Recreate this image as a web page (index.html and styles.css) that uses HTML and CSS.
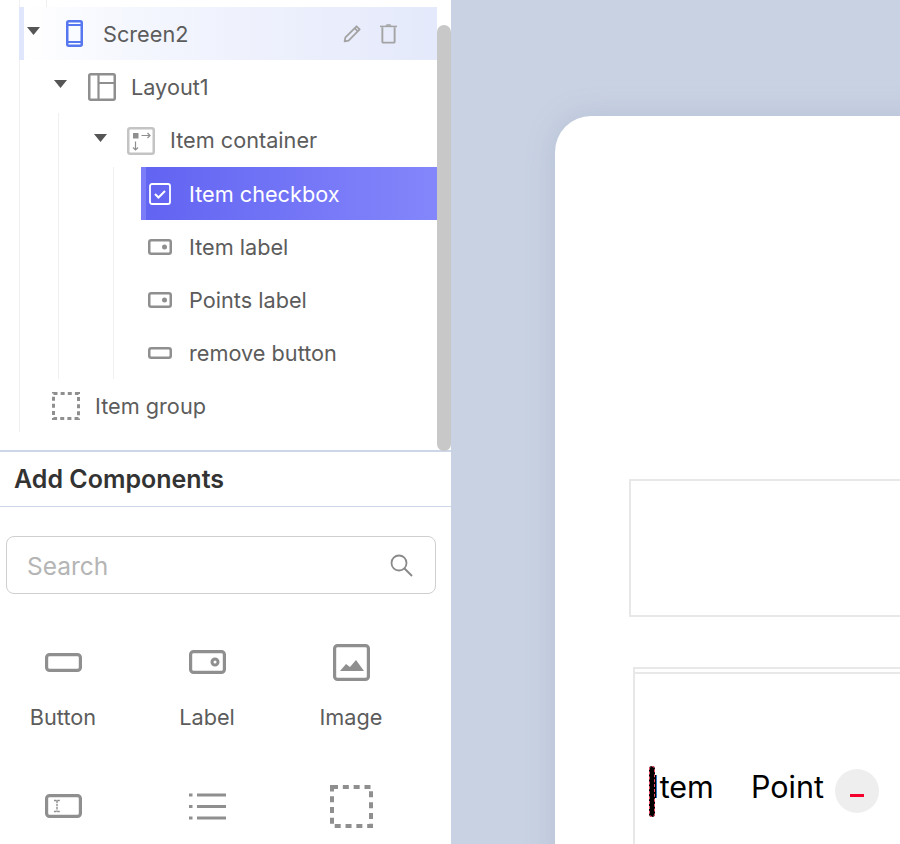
FILE: index.html
```html
<!DOCTYPE html>
<html lang="en">
<head>
<meta charset="utf-8">
<title>Designer</title>
<link rel="stylesheet" href="styles.css">
</head>
<body>
<div class="app">
  <aside class="panel">
    <section class="tree-pane">
      <div class="stub"></div>
      <div class="root-branch">
        <div class="row row-screen">
          <svg class="arrow arrow-screen" viewBox="0 0 13 8"><path d="M0 0h13L6.500 8z"/></svg>
          <svg class="ico ico-phone" viewBox="0 0 17 27"><rect x="1.250" y="1.250" width="14.500" height="24.500" rx="1.500" fill="none" stroke="#5677f0" stroke-width="2.500"/><path d="M1 5h15M1 22h15" stroke="#5677f0" stroke-width="2"/></svg>
          <span class="name name-screen">Screen2</span>
          <span class="actions">
            <svg class="ico-pencil" viewBox="0 0 18 18"><path d="M1.500 16.500l.8-3.800L12.800 2.200l3 3L5.300 15.700z" fill="none" stroke="#a3a3a3" stroke-width="1.700" stroke-linejoin="round"/><path d="M11 4l3 3" stroke="#a3a3a3" stroke-width="1.700"/></svg>
            <svg class="ico-trash" viewBox="0 0 18 21"><path d="M0 3h18" stroke="#a3a3a3" stroke-width="1.600"/><path d="M6 2.400C6 1 7 .8 9 .8s3 .2 3 1.600z" fill="#a3a3a3"/><path d="M2.500 4v15.200a1 1 0 0 0 1 1h11a1 1 0 0 0 1-1V4" fill="none" stroke="#a3a3a3" stroke-width="2"/></svg>
          </span>
        </div>
        <div class="row row-layout">
          <svg class="arrow arrow-layout" viewBox="0 0 13 8"><path d="M0 0h13L6.500 8z"/></svg>
          <svg class="ico ico-lg" viewBox="0 0 28 28"><rect x="1.250" y="1.250" width="25.500" height="25.500" rx="1.500" fill="none" stroke="#8f8f8f" stroke-width="2.500"/><path d="M10.500 1v26M10.500 10h17" stroke="#8f8f8f" stroke-width="2.200" fill="none"/></svg>
          <span class="name">Layout1</span>
        </div>
        <div class="branch-l2">
          <div class="row row-container">
            <svg class="arrow arrow-container" viewBox="0 0 13 8"><path d="M0 0h13L6.500 8z"/></svg>
            <svg class="ico ico-lg" viewBox="0 0 28 28"><rect x="1.250" y="1.250" width="25.500" height="25.500" rx="2" fill="none" stroke="#c4c4c4" stroke-width="2.500"/><rect x="6" y="6" width="5.500" height="5.500" fill="#8f8f8f"/><path d="M14.500 8.500h8.500M20.500 6l2.500 2.500-2.500 2.500M8.500 14.500v8M6 20.500l2.500 2.500 2.500-2.500" fill="none" stroke="#8f8f8f" stroke-width="1.200"/></svg>
            <span class="name name-flush">Item container</span>
          </div>
          <div class="branch-l3">
            <div class="row leaf leaf-selected">
              <svg class="ico ico-check" viewBox="0 0 22 22"><rect x="1" y="1" width="20" height="20" rx="2" fill="none" stroke="#fff" stroke-width="1.800"/><path d="M6 11l3.500 3.500L16 8" fill="none" stroke="#fff" stroke-width="2"/></svg>
              <span class="name name-selected">Item checkbox</span>
            </div>
            <div class="row leaf">
              <svg class="ico ico-leaf ico-label" viewBox="0 0 24 16"><rect x="1.250" y="1.250" width="21.500" height="13.500" rx="2" fill="none" stroke="#8f8f8f" stroke-width="2.500"/><circle cx="16.500" cy="8" r="2.500" fill="#8f8f8f"/></svg>
              <span class="name">Item label</span>
            </div>
            <div class="row leaf">
              <svg class="ico ico-leaf ico-label" viewBox="0 0 24 16"><rect x="1.250" y="1.250" width="21.500" height="13.500" rx="2" fill="none" stroke="#8f8f8f" stroke-width="2.500"/><circle cx="16.500" cy="8" r="2.500" fill="#8f8f8f"/></svg>
              <span class="name">Points label</span>
            </div>
            <div class="row leaf">
              <svg class="ico ico-leaf ico-btn" viewBox="0 0 24 12"><rect x="1.250" y="1.250" width="21.500" height="9.500" rx="2" fill="none" stroke="#8f8f8f" stroke-width="2.500"/></svg>
              <span class="name">remove button</span>
            </div>
          </div>
        </div>
        <div class="row row-group">
          <svg class="ico ico-lg" viewBox="0 0 28 28"><rect x="1.500" y="1.500" width="25" height="25" fill="none" stroke="#8f8f8f" stroke-width="3" stroke-dasharray="4 3.140"/></svg>
          <span class="name">Item group</span>
        </div>
      </div>
      <div class="scrollbar"></div>
    </section>

    <header class="add-head"><h2>Add Components</h2></header>

    <div class="search">
      <span class="search-ph">Search</span>
      <svg class="search-ico" viewBox="0 0 24 24"><circle cx="10" cy="10" r="7.500" fill="none" stroke="#8a8a8a" stroke-width="1.800"/><path d="M15.500 15.500l7.500 7.500" stroke="#8a8a8a" stroke-width="2"/></svg>
    </div>

    <div class="palette">
      <div class="comp">
        <div class="comp-ico"><svg class="p-btn" viewBox="0 0 37 19"><rect x="1.600" y="1.600" width="33.800" height="15.800" rx="3" fill="none" stroke="#8f8f8f" stroke-width="3.200"/></svg></div>
        <span class="comp-name">Button</span>
      </div>
      <div class="comp">
        <div class="comp-ico"><svg class="p-label" viewBox="0 0 37 24"><rect x="1.600" y="1.600" width="33.800" height="20.800" rx="3" fill="none" stroke="#8f8f8f" stroke-width="3.200"/><circle cx="26" cy="12" r="3" fill="none" stroke="#8f8f8f" stroke-width="3"/></svg></div>
        <span class="comp-name">Label</span>
      </div>
      <div class="comp">
        <div class="comp-ico"><svg class="p-image" viewBox="0 0 37 37"><rect x="1.600" y="1.600" width="33.800" height="33.800" rx="3" fill="none" stroke="#8f8f8f" stroke-width="3.200"/><path d="M7 27l6-7 4 3 6-7 8 11z" fill="#8f8f8f"/></svg></div>
        <span class="comp-name">Image</span>
      </div>
      <div class="comp">
        <div class="comp-ico"><svg class="p-input" viewBox="0 0 37 24"><rect x="1.600" y="1.600" width="33.800" height="20.800" rx="3" fill="none" stroke="#8f8f8f" stroke-width="3.200"/><path d="M9 6.500h6M9 17.500h6M12 6.500v11" fill="none" stroke="#8f8f8f" stroke-width="1.400" stroke-dasharray="2.500 .8"/></svg></div>
      </div>
      <div class="comp">
        <div class="comp-ico"><svg class="p-list" viewBox="0 0 37 27"><path d="M8 2h29M8 13.500h29M8 25h29" stroke="#8f8f8f" stroke-width="3.200"/><path d="M0 2h3.500M0 13.500h3.500M0 25h3.500" stroke="#8f8f8f" stroke-width="3.200"/></svg></div>
      </div>
      <div class="comp">
        <div class="comp-ico"><svg class="p-group" viewBox="0 0 43 43"><rect x="2" y="2" width="39" height="39" fill="none" stroke="#8f8f8f" stroke-width="4" stroke-dasharray="6 4.830"/></svg></div>
      </div>
    </div>
  </aside>

  <main class="canvas">
    <div class="phone">
      <div class="box-top"></div>
      <div class="box-list">
        <div class="box-inner">
          <div class="item-row">
            <span class="item-text"><span class="checkbar"></span>Item</span>
            <span class="point-text">Point</span>
            <span class="minus"><span class="minus-dash"></span></span>
          </div>
        </div>
      </div>
    </div>
  </main>
</div>
</body>
</html>
```

FILE: styles.css
```css
* { box-sizing: border-box; }
html, body { margin: 0; padding: 0; height: 100%; overflow: hidden; }
body { font-family: Inter, "Liberation Sans", sans-serif; background: #fff; color: #5c5c5c; }
svg { display: block; flex: none; }

.app { display: flex; width: 900px; height: 844px; overflow: hidden; }
.panel { width: 451px; flex: none; background: #fff; height: 844px; overflow: hidden; }

/* tree */
.tree-pane { position: relative; height: 452px; border-bottom: 2px solid #cdd6e6; }
.stub { position: absolute; left: 46px; top: 0; width: 1px; height: 7px; background: #efefef; }
.scrollbar { position: absolute; left: 437px; top: 25px; width: 14px; height: 426px; background: #c8c8c8; border-radius: 7px; }
.root-branch { margin-left: 19px; width: 418px; height: 432px; padding-top: 7px; border-left: 1px solid #f0f0f0; }

.row { display: flex; align-items: center; height: 53px; }
.name { font-size: 21.700px; line-height: 53px; margin-top: 2px; white-space: nowrap; color: #5c5c5c; }
.name-flush { margin-top: 0; }
.arrow { width: 13px; height: 8px; fill: #555; margin-bottom: 6px; }

.row-screen { margin-left: -1px; padding-left: 3px; border-left: 5px solid #e0e6fb; background: linear-gradient(90deg, #fff 0%, #f5f7fe 25%, #e4e9fb 100%); }
.ico-phone { width: 17px; height: 27px; margin-left: 26px; }
.name-screen { margin-left: 20px; }
.actions { margin-left: auto; margin-right: 40px; display: flex; align-items: center; gap: 18px; }
.ico-pencil { width: 19px; height: 19px; }
.ico-trash { width: 17px; height: 21px; }

.row-layout { padding-left: 34px; }
.ico-lg { width: 28px; height: 28px; }
.row-layout .ico-lg { margin-left: 21px; }
.row-layout .name { margin-left: 15px; }

.branch-l2 { margin-left: 38px; border-left: 1px solid #f0f0f0; height: 266px; padding-top: 1px; }
.row-container { padding-left: 35px; }
.row-container .ico-lg { margin-left: 20px; }
.row-container .name { margin-left: 15px; }

.branch-l3 { margin-left: 54px; border-left: 1px solid #f0f0f0; }
.leaf { margin-left: 27px; padding-left: 7px; width: 296px; }
.leaf-selected { background: linear-gradient(90deg, #6264f2 0%, #8486fb 100%); border-left: 5px solid #7a7cf8; padding-left: 3px; }
.ico-check { width: 22px; height: 22px; }
.ico-leaf { width: 24px; }
.ico-label { height: 16px; }
.ico-btn { height: 12px; }
.leaf .name { margin-left: 17px; }
.leaf-selected .name { margin-left: 18px; }
.name-selected { color: #fff; }

.row-group { padding-left: 32px; }
.row-group .name { margin-left: 15px; }

/* add components */
.add-head { height: 55px; border-bottom: 1px solid #cdd6e6; display: flex; align-items: center; padding-left: 14px; }
.add-head h2 { margin: 0; font-size: 25px; font-weight: 600; color: #333; line-height: 30px; }

.search { margin: 29px 0 0 6px; width: 430px; height: 58px; border: 1px solid #cfcfcf; border-radius: 8px; display: flex; align-items: center; justify-content: space-between; padding: 0 22px 0 20px; }
.search-ph { font-size: 24.500px; color: #b5b5b5; margin-top: 2px; }
.search-ico { width: 24px; height: 24px; }

.palette { display: grid; grid-template-columns: repeat(3, 72px); column-gap: 72px; row-gap: 54px; padding: 46px 0 0 27px; }
.comp { display: flex; flex-direction: column; align-items: center; }
.comp-ico { height: 44px; width: 72px; display: flex; align-items: center; justify-content: center; }
.comp-name { font-size: 21.700px; line-height: 26px; margin-top: 20px; color: #5c5c5c; white-space: nowrap; }
.p-btn { width: 37px; height: 19px; }
.p-label { width: 37px; height: 24px; }
.p-image { width: 37px; height: 37px; }
.p-input { width: 37px; height: 24px; }
.p-list { width: 37px; height: 27px; }
.p-group { width: 43px; height: 43px; }

/* canvas */
.canvas { flex: 1; min-width: 0; height: 844px; background: #c9d2e3; padding: 116px 0 0 104px; overflow: hidden; }
.phone { width: 600px; height: 900px; background: #fff; border-radius: 36px 0 0 0; box-shadow: 0 0 30px rgba(110, 130, 165, .22); padding: 363px 0 0 75px; }
.box-top { height: 138px; margin-left: -1px; border: 2px solid #e8e8e8; border-right: 0; }
.box-list { margin: 50px 0 0 3px; height: 300px; border: 2px solid #e8e8e8; border-right: 0; padding-top: 3px; }
.box-inner { border-top: 2px solid #e8e8e8; height: 100%; padding: 95px 0 0 13px; }
.item-row { display: flex; align-items: center; height: 44px; }
.item-text, .point-text { font-size: 30.500px; line-height: 36px; color: #000; position: relative; top: -4px; white-space: nowrap; }
.item-text { width: 103px; padding-left: 3px; }
.point-text { width: 84px; }
.checkbar { position: absolute; left: 1px; top: -3px; width: 6px; height: 51px; background: #000; border-radius: 3px; outline: 1px dashed #f0506a; outline-offset: -1px; }
.minus { width: 44px; height: 44px; border-radius: 50%; background: #eee; display: flex; align-items: center; justify-content: center; }
.minus-dash { width: 14px; height: 3px; background: #f5002d; margin-top: 8px; }
```
